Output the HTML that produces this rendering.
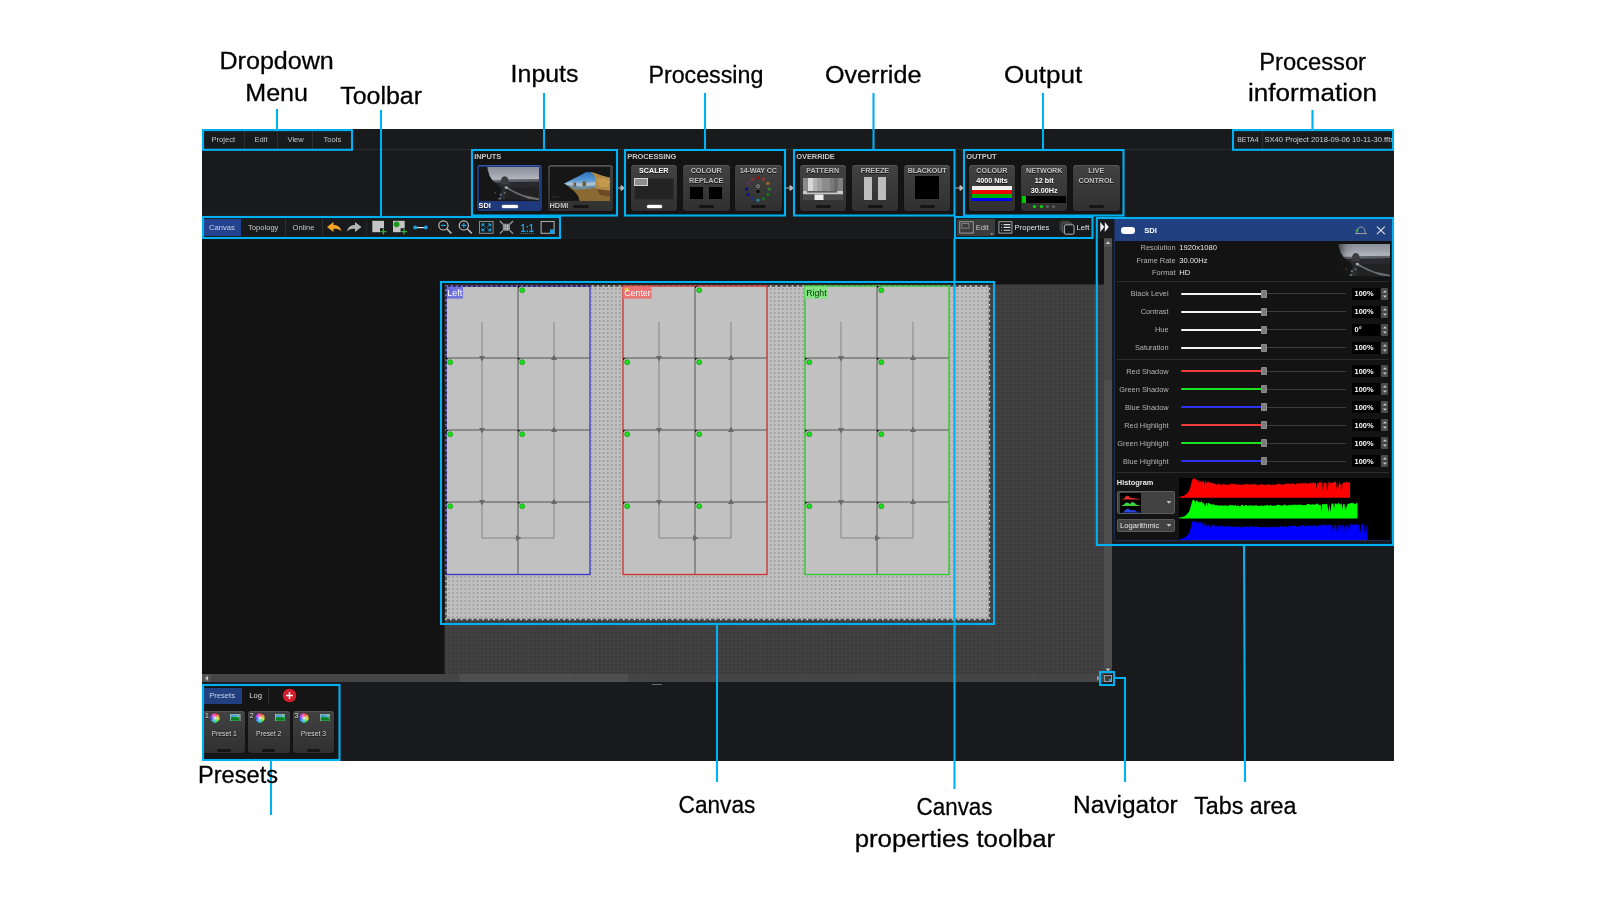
<!DOCTYPE html>
<html>
<head>
<meta charset="utf-8">
<title>Processor UI overview</title>
<style>
*{box-sizing:border-box;margin:0;padding:0}
html,body{width:1600px;height:900px;overflow:hidden;background:#fff;font-family:"Liberation Sans",sans-serif}
#stage{will-change:transform;position:absolute;left:0;top:0;width:1600px;height:900px;overflow:hidden;background:#fff}
#app{position:absolute;left:202px;top:129px;width:1192px;height:632px;background:#191a1c;overflow:hidden}
.abs{position:absolute}
/* all coordinates inside #app are expressed in page coordinates via this shim */
#app .pg{position:absolute;left:-202px;top:-129px;width:1600px;height:900px}
.t{position:absolute;color:#d8d8d8;font-size:8px;white-space:nowrap;line-height:10px}
#anno{position:absolute;left:0;top:0;width:1600px;height:900px;pointer-events:none}
#anno text{font-family:"Liberation Sans",sans-serif;font-size:23.3px;fill:#000;stroke:#000;stroke-width:0.28px}

.grp{position:absolute;background:#141414}
.gl{position:absolute;left:2.3px;top:2.8px;font-size:7.5px;font-weight:bold;color:#c6c6c6;line-height:8px;letter-spacing:-0.1px}
.tile{position:absolute;width:46.5px;height:46px;border-radius:3.5px;background:linear-gradient(#424242,#303030);box-shadow:inset 0 1px 0 #565656,0 0 0 0.5px #101010}
.tile .tl{position:absolute;font-weight:bold;color:#c4c4c4;line-height:9px;white-space:nowrap;text-shadow:0 0.6px 0 #111}
.tile .tc{position:absolute;left:0;width:100%;text-align:center;font-weight:bold;font-size:7.2px;color:#c0c0c0;line-height:9px;white-space:nowrap;text-shadow:0 0.6px 0 #111}
.pill{position:absolute;height:3.6px;border-radius:2px;background:#141414}
.pill.on{background:#fff;box-shadow:0 0 1.5px #fff}

.pr{text-align:right;color:#b4b4b4;font-size:7.4px}
.pv{color:#e8e8e8;font-size:7.6px}
</style>
</head>
<body>
<div id="stage">
<div id="app"><div class="pg">
<!--P1--><!-- menu bar -->
<div class="abs" style="left:202px;top:149px;width:1192px;height:1px;background:#2b2c30"></div>
<div class="t" style="left:211.5px;top:134.7px;font-size:7.6px;color:#c4c4c4">Project</div>
<div class="t" style="left:254.5px;top:134.7px;font-size:7.6px;color:#c4c4c4">Edit</div>
<div class="t" style="left:287.5px;top:134.7px;font-size:7.6px;color:#c4c4c4">View</div>
<div class="t" style="left:323.5px;top:134.7px;font-size:7.6px;color:#c4c4c4">Tools</div>
<div class="abs" style="left:244px;top:131px;width:1px;height:18px;background:#2e2f33"></div>
<div class="abs" style="left:277px;top:131px;width:1px;height:18px;background:#2e2f33"></div>
<div class="abs" style="left:312px;top:131px;width:1px;height:18px;background:#2e2f33"></div>
<div class="abs" style="left:1261.5px;top:131px;width:1px;height:18px;background:#2e2f33"></div>
<div class="t" style="left:1237.2px;top:134.5px;font-size:6.9px;color:#d0d0d0">BETA4</div>
<div class="t" style="left:1264.4px;top:134.5px;font-size:7.6px;color:#d0d0d0;letter-spacing:0.01px">SX40 Project 2018-09-06 10-11-30.ffb</div>

<!-- pipeline groups -->
<div class="grp" style="left:472px;top:150px;width:145px;height:66px"><span class="gl">INPUTS</span></div>
<div class="grp" style="left:625px;top:150px;width:160px;height:66px"><span class="gl">PROCESSING</span></div>
<div class="grp" style="left:794px;top:150px;width:161px;height:66px"><span class="gl">OVERRIDE</span></div>
<div class="grp" style="left:964px;top:150px;width:160px;height:66px"><span class="gl">OUTPUT</span></div>
<svg class="abs" style="left:616px;top:184px" width="9" height="8" viewBox="0 0 9 8"><path d="M0 4H6M5 1.5L8.5 4L5 6.5Z" stroke="#b8b8b8" stroke-width="1" fill="#b8b8b8"/></svg>
<svg class="abs" style="left:785px;top:184px" width="9" height="8" viewBox="0 0 9 8"><path d="M0 4H6M5 1.5L8.5 4L5 6.5Z" stroke="#b8b8b8" stroke-width="1" fill="#b8b8b8"/></svg>
<svg class="abs" style="left:955px;top:184px" width="9" height="8" viewBox="0 0 9 8"><path d="M0 4H6M5 1.5L8.5 4L5 6.5Z" stroke="#b8b8b8" stroke-width="1" fill="#b8b8b8"/></svg>

<!-- INPUT tiles -->
<div class="tile" style="left:477px;top:164.5px;width:64.5px;background:#1e3a7c;box-shadow:inset 0 1px 0 #3658a8,0 0 0 0.5px #101010">
 <svg class="abs" style="left:2px;top:2px" width="60" height="34" viewBox="0 0 60 34"><defs><linearGradient id="sky" x1="0" y1="0" x2="0" y2="1"><stop offset="0" stop-color="#868a94"/><stop offset="0.2" stop-color="#9a9ea8"/><stop offset="0.37" stop-color="#b2b6be"/><stop offset="0.42" stop-color="#70747c"/><stop offset="1" stop-color="#1c1d1e"/></linearGradient>
<radialGradient id="skyglow" cx="0.55" cy="0.05" r="0.5"><stop offset="0" stop-color="#c8ccd4" stop-opacity="0.7"/><stop offset="1" stop-color="#c8ccd4" stop-opacity="0"/></radialGradient>
<filter id="bl" x="-5%" y="-5%" width="110%" height="110%"><feGaussianBlur stdDeviation="0.55"/></filter>
<clipPath id="cp60"><rect width="60" height="34"/></clipPath></defs><g clip-path="url(#cp60)"><g filter="url(#bl)">
<rect x="-2" y="-2" width="64" height="38" fill="url(#sky)"/>
<path d="M-2 13.2L18 13.5L30 12.6L45 12.2L62 12V17H-2Z" fill="#5c6068"/>
<path d="M-2 15L20 15.4L34 15L62 14.4V36H-2Z" fill="#2a2b2d"/>
<path d="M-2 22L62 20V36H-2Z" fill="#222324"/>
<path d="M21.6 17.5C21.4 13 22.6 9.6 25.4 9.3C28.4 9.2 30.2 12.4 30 17.5Z" fill="#3b3d40"/>
<path d="M-2 -2H8.1L8.8 3L10.6 8.7L13.1 13.1L18.1 17.5L21 19.6L23 24L21 34L-2 36Z" fill="#141516"/>
<path d="M25.4 20.4L28 19.8L34 23.4L44 28L60.5 31.6V33.2L50 32L38 27.2L29 22.6Z" fill="#6c6e70"/>
<path d="M25.6 19.4L28.4 19.2L29 21.6L26 22Z" fill="#a6a8aa"/>
<path d="M19 34L21.4 27L23 22.5L25.8 21.6L27.4 24L26.4 29L26 34Z" fill="#2c2d30"/>
<rect x="20.8" y="26.8" width="1.8" height="1.8" fill="#5c7cac"/><rect x="24.8" y="25.2" width="1.6" height="1.4" fill="#7a7c7e"/><rect x="19.4" y="31" width="2.6" height="1.4" fill="#7c7e80"/><rect x="15.4" y="25" width="1.4" height="1.4" fill="#555"/>
<path d="M-2 33L30 32.6L62 33.4V36H-2Z" fill="#171717"/>
</g></g></svg>
 <div class="tl" style="left:1.5px;top:36px;color:#fff;font-size:7.4px">SDI</div>
 <div class="pill on" style="left:24.5px;top:40px;width:16px"></div>
</div>
<div class="tile" style="left:548px;top:164.5px;width:64.5px">
 <svg class="abs" style="left:2px;top:2px" width="60" height="34" viewBox="0 0 60 34"><defs>
<linearGradient id="csky" x1="0" y1="0" x2="0" y2="1"><stop offset="0" stop-color="#2c74c0"/><stop offset="0.6" stop-color="#5a98d4"/><stop offset="1" stop-color="#b4cce0"/></linearGradient></defs>
<g clip-path="url(#cp60)"><g filter="url(#bl)">
<rect x="-2" y="-2" width="64" height="38" fill="#141516"/>
<path d="M14 16.5L18 14.5L26 10.5L31 8L36 5L43 5.5L46 9L46 17L30 19Z" fill="url(#csky)"/>
<path d="M14 16.5L22 15.5L32 16.5L46 15V20L30 22L20 20Z" fill="#a8c0d0"/>
<path d="M17 18L30 19.5L46 18.5V24L30 25L22 22Z" fill="#6a8ca0"/>
<path d="M23.5 15.5h2.6v4h-2.6zM32.5 14.5h3.6v4.6h-3.6z" fill="#6e5a3e"/>
<path d="M19 20L26 22.5L36 22L46 21L62 24V36H30L28 29Z" fill="#8a6a30"/>
<path d="M40 5L45 6L52 8.5L62 11V27L52 25L45 21L46 13L44 8Z" fill="#b08a44"/>
<path d="M46 12L54 11L60 14L58 20L50 20Z" fill="#c49a50"/>
<path d="M47 22L62 24V30L50 28Z" fill="#6e4a28"/>
<path d="M-2 -2H62V11L52 8L44 4.5L36 4L30 7.5L24 10.5L18 13.5L13.5 16.5L18 20L24 24L28 29L30 36H-2Z" fill="#151617"/>
<path d="M2 30H9" stroke="#444" stroke-width="0.6"/>
</g></g></svg>
 <div class="tl" style="left:1.5px;top:36px;font-size:7.4px">HDMI</div>
 <div class="pill" style="left:24.5px;top:40px;width:16px"></div>
</div>

<!-- PROCESSING tiles -->
<div class="tile" style="left:630.5px;top:164.5px">
 <div class="tc" style="top:1.5px;color:#fff">SCALER</div>
 <div class="abs" style="left:3.3px;top:13px;width:40px;height:22.5px;background:#232323;border:1px solid #303030"></div>
 <div class="abs" style="left:3.3px;top:13px;width:14px;height:8px;background:#8e8e8e;border:1px solid #d2d2d2"></div>
 <div class="pill on" style="left:16px;top:40px;width:15px"></div>
</div>
<div class="tile" style="left:683px;top:164.5px">
 <div class="tc" style="top:1.5px">COLOUR</div><div class="tc" style="top:11.7px">REPLACE</div>
 <div class="abs" style="left:7px;top:22px;width:13px;height:12.5px;background:#000"></div>
 <div class="abs" style="left:26px;top:22px;width:13px;height:12.5px;background:#000"></div>
 <div class="pill" style="left:16px;top:40px;width:15px"></div>
</div>
<div class="tile" style="left:735px;top:164.5px">
 <div class="tc" style="top:1.5px;letter-spacing:-0.15px">14-WAY CC</div>
 <svg class="abs" style="left:9px;top:10px" width="28" height="28" viewBox="-14 -14 28 28">
  <g>
   <circle cx="0" cy="-11.3" r="1.7" fill="#8c1010"/><circle cx="5.6" cy="-9.8" r="1.7" fill="#8a3a30"/><circle cx="9.8" cy="-5.6" r="1.7" fill="#a06a20"/>
   <circle cx="11.3" cy="0" r="1.7" fill="#2f7a2f"/><circle cx="9.8" cy="5.6" r="1.7" fill="#137a13"/><circle cx="5.6" cy="9.8" r="1.7" fill="#1d6e2a"/>
   <circle cx="0" cy="11.3" r="1.7" fill="#2a7c9a"/><circle cx="-5.6" cy="9.8" r="1.7" fill="#18308a"/><circle cx="-9.8" cy="5.6" r="1.7" fill="#0a148c"/>
   <circle cx="-11.3" cy="0" r="1.7" fill="#0a1080"/><circle cx="-9.8" cy="-5.6" r="1.7" fill="#5a3058"/><circle cx="-5.6" cy="-9.8" r="1.7" fill="#8a3030"/>
   <circle cx="0" cy="-2.7" r="1.5" fill="none" stroke="#a8a8a8" stroke-width="0.8"/><circle cx="0" cy="2.4" r="1.5" fill="#000"/>
  </g>
 </svg>
 <div class="pill" style="left:16px;top:40px;width:15px"></div>
</div>

<!-- OVERRIDE tiles -->
<div class="tile" style="left:799.5px;top:164.5px">
 <div class="tc" style="top:1.5px">PATTERN</div>
 <svg class="abs" style="left:3.5px;top:13px" width="40" height="22.5" viewBox="0 0 40 22.5">
  <rect width="40" height="22.5" fill="#4a4a4a"/>
  <rect x="0" y="0" width="5" height="13" fill="#8a8a8a"/><rect x="5" y="0" width="5" height="13" fill="#d8d8d8"/><rect x="10" y="0" width="4" height="13" fill="#b4b4b4"/>
  <rect x="14" y="0" width="5" height="13" fill="#a0a0a0"/><rect x="19" y="0" width="8" height="13" fill="#8c8c8c"/><rect x="27" y="0" width="4" height="13" fill="#7a7a7a"/>
  <rect x="31" y="0" width="4" height="13" fill="#6a6a6a"/><rect x="35" y="0" width="5" height="13" fill="#808080"/>
  <rect x="0" y="13" width="40" height="3.5" fill="#c8c8c8"/><rect x="4" y="13" width="30" height="1.6" fill="#5a5a5a"/>
  <rect x="0" y="16.5" width="40" height="6" fill="#484848"/><rect x="11.5" y="16.5" width="9" height="6" fill="#ececec"/>
 </svg>
 <div class="pill" style="left:16px;top:40px;width:15px"></div>
</div>
<div class="tile" style="left:851.7px;top:164.5px">
 <div class="tc" style="top:1.5px">FREEZE</div>
 <div class="abs" style="left:12.5px;top:12px;width:8.2px;height:23px;background:#bdbdbd"></div>
 <div class="abs" style="left:26.3px;top:12px;width:8.2px;height:23px;background:#bdbdbd"></div>
 <div class="pill" style="left:16px;top:40px;width:15px"></div>
</div>
<div class="tile" style="left:903.8px;top:164.5px">
 <div class="tc" style="top:1.5px;letter-spacing:-0.2px">BLACKOUT</div>
 <div class="abs" style="left:11.4px;top:11.7px;width:23.6px;height:23.2px;background:#000"></div>
 <div class="pill" style="left:16px;top:40px;width:15px"></div>
</div>

<!-- OUTPUT tiles -->
<div class="tile" style="left:968.7px;top:164.5px">
 <div class="tc" style="top:1.5px">COLOUR</div><div class="tc" style="top:11.2px;color:#fff">4000 Nits</div>
 <div class="abs" style="left:3px;top:21.5px;width:40.5px;height:3.8px;background:#f0f0f0"></div>
 <div class="abs" style="left:3px;top:25.3px;width:40.5px;height:4px;background:#f00000"></div>
 <div class="abs" style="left:3px;top:29.3px;width:40.5px;height:4px;background:#00b000"></div>
 <div class="abs" style="left:3px;top:33.3px;width:40.5px;height:3.6px;background:#0000f0"></div>
</div>
<div class="tile" style="left:1020.9px;top:164.5px">
 <div class="tc" style="top:1.5px;letter-spacing:-0.15px">NETWORK</div><div class="tc" style="top:11.2px;color:#fff">12 bit</div><div class="tc" style="top:21.3px;color:#fff">30.00Hz</div>
 <div class="abs" style="left:1.3px;top:31px;width:43.5px;height:7.2px;background:#000"></div>
 <div class="abs" style="left:1.3px;top:31px;width:3.8px;height:7.2px;background:#00c800"></div>
 <div class="abs" style="left:12.5px;top:40.7px;width:3px;height:3px;border-radius:2px;background:#00e800"></div>
 <div class="abs" style="left:18.7px;top:40.7px;width:3px;height:3px;border-radius:2px;background:#00e800"></div>
 <div class="abs" style="left:25px;top:40.7px;width:3px;height:3px;border-radius:2px;background:#606060"></div>
 <div class="abs" style="left:31.2px;top:40.7px;width:3px;height:3px;border-radius:2px;background:#606060"></div>
</div>
<div class="tile" style="left:1073px;top:164.5px">
 <div class="tc" style="top:1.5px">LIVE</div><div class="tc" style="top:11.7px">CONTROL</div>
 <div class="pill" style="left:16px;top:40px;width:15px"></div>
</div>
<!--/P1-->
<!--P2--><!-- toolbar -->
<div class="abs" style="left:204px;top:219px;width:36.5px;height:16.5px;background:#24438e"></div>
<div class="t" style="left:209px;top:222.5px;font-size:7.6px;color:#c9d3ea">Canvas</div>
<div class="t" style="left:248px;top:222.5px;font-size:7.6px;color:#c8c8c8">Topology</div>
<div class="t" style="left:292.5px;top:222.5px;font-size:7.6px;color:#c8c8c8">Online</div>
<div class="abs" style="left:285px;top:219px;width:1px;height:17px;background:#2e2f33"></div>
<div class="abs" style="left:322px;top:219px;width:1px;height:17px;background:#2e2f33"></div>
<div class="abs" style="left:366px;top:219px;width:1px;height:17px;background:#26272b"></div>
<svg class="abs" style="left:320px;top:214px" width="250" height="28" viewBox="320 214 250 28">
 <!-- undo / redo -->
 <path d="M327 227L333.5 222V225C338 225 341 227.5 341.3 231.5C339.8 229.3 337.5 228.5 333.5 228.8V232Z" fill="#f4a62a"/>
 <path d="M361.5 227L355 222V225C350.5 225 347.5 227.5 347.2 231.5C348.7 229.3 351 228.5 355 228.8V232Z" fill="#b4b4b4"/>
 <!-- add tile -->
 <rect x="372.3" y="220.8" width="11.7" height="11.4" fill="#c4c4c4"/>
 <rect x="380" y="228.2" width="6.6" height="6.4" fill="#191a1c"/>
 <path d="M383.4 228.6V234.6M380.4 231.6H386.4" stroke="#2fb52f" stroke-width="1.3"/>
 <!-- add tile w/ dot -->
 <rect x="393" y="220.8" width="11.7" height="11.4" fill="#c4c4c4"/>
 <circle cx="396.6" cy="224.3" r="2.9" fill="#1e9a1e"/>
 <rect x="400.6" y="228.2" width="6.6" height="6.4" fill="#191a1c"/>
 <path d="M404 228.6V234.6M401 231.6H407" stroke="#2fb52f" stroke-width="1.3"/>
 <!-- connect -->
 <path d="M415 227.6H426" stroke="#e8e8e8" stroke-width="1.2"/>
 <circle cx="415.2" cy="227.6" r="2" fill="#1aa0e0"/><circle cx="425.8" cy="227.6" r="2" fill="#1aa0e0"/>
 <!-- zoom out -->
 <circle cx="443.4" cy="225.4" r="4.6" fill="none" stroke="#bdbdbd" stroke-width="1.2"/>
 <path d="M446.8 228.8L451.4 233.4" stroke="#bdbdbd" stroke-width="1.5"/>
 <path d="M441 225.4H445.8" stroke="#1aa0e0" stroke-width="1.3"/>
 <!-- zoom in -->
 <circle cx="463.8" cy="225.4" r="4.6" fill="none" stroke="#bdbdbd" stroke-width="1.2"/>
 <path d="M467.2 228.8L471.8 233.4" stroke="#bdbdbd" stroke-width="1.5"/>
 <path d="M461.4 225.4H466.2M463.8 223V227.8" stroke="#1aa0e0" stroke-width="1.3"/>
 <!-- fit -->
 <rect x="479.5" y="221.5" width="13.6" height="11.8" fill="none" stroke="#8c8c8c" stroke-width="1"/>
 <path d="M481.5 223.5H485L481.5 227ZM491.1 223.5H487.6L491.1 227ZM481.5 231.3H485L481.5 227.8ZM491.1 231.3H487.6L491.1 227.8Z" fill="#1aa0e0"/>
 <path d="M482.5 224.5L485.3 226.6M490.1 224.5L487.3 226.6M482.5 230.3L485.3 228.2M490.1 230.3L487.3 228.2" stroke="#1aa0e0" stroke-width="0.9"/>
 <!-- fit selected -->
 <path d="M499.8 221L503.3 224.5M513 221L509.5 224.5M499.8 233.6L503.3 230.1M513 233.6L509.5 230.1" stroke="#a8a8a8" stroke-width="1.1"/>
 <rect x="502.8" y="223.8" width="7.2" height="7" fill="#7a7a7a"/>
 <path d="M505.2 223.8V230.8M507.6 223.8V230.8M502.8 226.1H510M502.8 228.5H510" stroke="#d0d0d0" stroke-width="0.6"/>
 <!-- 1:1 -->
 <text x="520.6" y="232.4" font-family="Liberation Sans, sans-serif" font-size="11.8" font-weight="bold" fill="#1aa0e0" textLength="13.2" lengthAdjust="spacingAndGlyphs">1:1</text>
 <path d="M520.8 233.4H534.2" stroke="#1aa0e0" stroke-width="0.8" stroke-dasharray="1.2 0.8"/>
 <!-- navigator toggle -->
 <rect x="541.1" y="221.5" width="13" height="11.8" fill="none" stroke="#a8a8a8" stroke-width="1.1"/>
 <rect x="550" y="229.4" width="4.4" height="4.2" fill="#1aa0e0"/>
</svg>

<!-- canvas properties toolbar -->
<div class="abs" style="left:957px;top:219.3px;width:37.5px;height:17px;background:#3b3b3b;border-radius:1px"></div>
<svg class="abs" style="left:950px;top:214px" width="170" height="28" viewBox="950 214 170 28">
 <rect x="959.7" y="221.7" width="13.6" height="11.4" fill="none" stroke="#9a9a9a" stroke-width="1"/>
 <rect x="961.8" y="223.6" width="7.2" height="4.6" fill="none" stroke="#8a8a8a" stroke-width="0.9"/>
 <path d="M990.3 233.3H993.3L991.8 235Z" fill="#b0b0b0"/>
 <rect x="998.9" y="221.7" width="13" height="11.4" fill="none" stroke="#a0a0a0" stroke-width="1"/>
 <path d="M1001 224.6H1002.2M1001 227.4H1002.2M1001 230.2H1002.2" stroke="#b0b0b0" stroke-width="1"/>
 <path d="M1003.6 224.6H1010.4M1003.6 227.4H1010.4M1003.6 230.2H1010.4" stroke="#e0e0e0" stroke-width="1.1"/>
 <rect x="1060.2" y="221.2" width="9.6" height="9.4" rx="1.3" fill="#2c2c2c" stroke="#4a4a4a" stroke-width="0.9"/>
 <rect x="1062.2" y="223" width="9.6" height="9.4" rx="1.3" fill="#2c2c2c" stroke="#6a6a6a" stroke-width="0.9"/>
 <rect x="1064.4" y="224.8" width="9.6" height="9.4" rx="1.3" fill="#17181a" stroke="#b4b4b4" stroke-width="1"/>
 <!-- collapse chevrons -->
 <path d="M1100.3 222L1104.3 227L1100.3 232ZM1104.8 222L1108.8 227L1104.8 232Z" fill="#f0f0f0"/>
</svg>
<div class="t" style="left:975.7px;top:223px;font-size:7.6px;color:#c8c8c8">Edit</div>
<div class="t" style="left:1014.6px;top:223px;font-size:7.6px;color:#e4e4e4">Properties</div>
<div class="t" style="left:1076.6px;top:223px;font-size:7.6px;color:#e4e4e4">Left</div>
<!--/P2-->
<!--P3--><!-- canvas viewport -->
<div class="abs" style="left:202px;top:238.7px;width:902px;height:436px;background:#131313"></div>
<svg class="abs" style="left:202px;top:238px" width="902" height="436" viewBox="202 238 902 436">
<defs>
<pattern id="dd" x="446" y="286" width="4.07" height="4" patternUnits="userSpaceOnUse"><rect width="4.07" height="4" fill="#414141"/><rect x="2.3" y="2.4" width="1.5" height="1.2" fill="#2f2f2f"/></pattern>
<pattern id="dl" x="446" y="286" width="4.07" height="4" patternUnits="userSpaceOnUse"><rect width="4.07" height="4" fill="#bfbfbf"/><rect x="2.3" y="2.4" width="1.5" height="1.2" fill="#858585"/></pattern>
<marker id="x"/>
</defs>
<rect x="444.6" y="284.4" width="660" height="390" fill="url(#dd)"/>
<rect x="446" y="286" width="543.5" height="333.5" fill="url(#dl)"/>
<rect x="446" y="286" width="543.5" height="333.5" fill="none" stroke="#505050" stroke-width="1.6"/>
<rect x="446" y="286" width="543.5" height="333.5" fill="none" stroke="#dcdcdc" stroke-width="1.3" stroke-dasharray="1.7 3.7"/>
<rect x="446" y="286" width="144" height="288.5" fill="#c1c1c1"/>
<path d="M518 286V574.5M446 358H590M446 430H590M446 502H590" stroke="#545454" stroke-width="1" fill="none"/>
<path d="M482 322V538H554V322" stroke="#808080" stroke-width="0.9" fill="none"/>
<path d="M479 356H485L482 361.5Z" fill="#6a6a6a"/>
<path d="M551 360H557L554 354.5Z" fill="#6a6a6a"/>
<path d="M479 428H485L482 433.5Z" fill="#6a6a6a"/>
<path d="M551 432H557L554 426.5Z" fill="#6a6a6a"/>
<path d="M479 500H485L482 505.5Z" fill="#6a6a6a"/>
<path d="M551 504H557L554 498.5Z" fill="#6a6a6a"/>
<path d="M516 535V541L521.5 538Z" fill="#6a6a6a"/>
<rect x="446" y="286" width="144" height="288.5" fill="none" stroke="#3a3ac4" stroke-width="1.35"/>
<path d="M518 286h2.6l-2.6 2.6Z" fill="#1a1a1a"/>
<circle cx="522.2" cy="290.2" r="2.5" fill="#1de01d" stroke="#0c8c0c" stroke-width="0.6"/>
<path d="M446 358h2.6l-2.6 2.6Z" fill="#1a1a1a"/>
<circle cx="450.2" cy="362.2" r="2.5" fill="#1de01d" stroke="#0c8c0c" stroke-width="0.6"/>
<path d="M518 358h2.6l-2.6 2.6Z" fill="#1a1a1a"/>
<circle cx="522.2" cy="362.2" r="2.5" fill="#1de01d" stroke="#0c8c0c" stroke-width="0.6"/>
<path d="M446 430h2.6l-2.6 2.6Z" fill="#1a1a1a"/>
<circle cx="450.2" cy="434.2" r="2.5" fill="#1de01d" stroke="#0c8c0c" stroke-width="0.6"/>
<path d="M518 430h2.6l-2.6 2.6Z" fill="#1a1a1a"/>
<circle cx="522.2" cy="434.2" r="2.5" fill="#1de01d" stroke="#0c8c0c" stroke-width="0.6"/>
<path d="M446 502h2.6l-2.6 2.6Z" fill="#1a1a1a"/>
<circle cx="450.2" cy="506.2" r="2.5" fill="#1de01d" stroke="#0c8c0c" stroke-width="0.6"/>
<path d="M518 502h2.6l-2.6 2.6Z" fill="#1a1a1a"/>
<circle cx="522.2" cy="506.2" r="2.5" fill="#1de01d" stroke="#0c8c0c" stroke-width="0.6"/>
<circle cx="450.2" cy="290.2" r="2.5" fill="#2a50a0"/>
<rect x="445.7" y="286.4" width="17.3" height="12.2" fill="#6c6ce0" opacity="0.92"/>
<text x="447.2" y="296.2" font-family="Liberation Sans, sans-serif" font-size="9" fill="#fff" textLength="15.0" lengthAdjust="spacingAndGlyphs">Left</text>
<rect x="623" y="286" width="144" height="288.5" fill="#c1c1c1"/>
<path d="M695 286V574.5M623 358H767M623 430H767M623 502H767" stroke="#545454" stroke-width="1" fill="none"/>
<path d="M659 322V538H731V322" stroke="#808080" stroke-width="0.9" fill="none"/>
<path d="M656 356H662L659 361.5Z" fill="#6a6a6a"/>
<path d="M728 360H734L731 354.5Z" fill="#6a6a6a"/>
<path d="M656 428H662L659 433.5Z" fill="#6a6a6a"/>
<path d="M728 432H734L731 426.5Z" fill="#6a6a6a"/>
<path d="M656 500H662L659 505.5Z" fill="#6a6a6a"/>
<path d="M728 504H734L731 498.5Z" fill="#6a6a6a"/>
<path d="M693 535V541L698.5 538Z" fill="#6a6a6a"/>
<rect x="623" y="286" width="144" height="288.5" fill="none" stroke="#cc3434" stroke-width="1.35"/>
<path d="M695 286h2.6l-2.6 2.6Z" fill="#1a1a1a"/>
<circle cx="699.2" cy="290.2" r="2.5" fill="#1de01d" stroke="#0c8c0c" stroke-width="0.6"/>
<path d="M623 358h2.6l-2.6 2.6Z" fill="#1a1a1a"/>
<circle cx="627.2" cy="362.2" r="2.5" fill="#1de01d" stroke="#0c8c0c" stroke-width="0.6"/>
<path d="M695 358h2.6l-2.6 2.6Z" fill="#1a1a1a"/>
<circle cx="699.2" cy="362.2" r="2.5" fill="#1de01d" stroke="#0c8c0c" stroke-width="0.6"/>
<path d="M623 430h2.6l-2.6 2.6Z" fill="#1a1a1a"/>
<circle cx="627.2" cy="434.2" r="2.5" fill="#1de01d" stroke="#0c8c0c" stroke-width="0.6"/>
<path d="M695 430h2.6l-2.6 2.6Z" fill="#1a1a1a"/>
<circle cx="699.2" cy="434.2" r="2.5" fill="#1de01d" stroke="#0c8c0c" stroke-width="0.6"/>
<path d="M623 502h2.6l-2.6 2.6Z" fill="#1a1a1a"/>
<circle cx="627.2" cy="506.2" r="2.5" fill="#1de01d" stroke="#0c8c0c" stroke-width="0.6"/>
<path d="M695 502h2.6l-2.6 2.6Z" fill="#1a1a1a"/>
<circle cx="699.2" cy="506.2" r="2.5" fill="#1de01d" stroke="#0c8c0c" stroke-width="0.6"/>
<rect x="622.7" y="286.4" width="28.8" height="12.2" fill="#ee6c6c" opacity="0.92"/><circle cx="626.6" cy="289.6" r="2.2" fill="#d8d040" opacity="0.85"/>
<text x="624.2" y="296.2" font-family="Liberation Sans, sans-serif" font-size="9" fill="#fff" textLength="26.5" lengthAdjust="spacingAndGlyphs">Center</text>
<rect x="805" y="286" width="144" height="288.5" fill="#c1c1c1"/>
<path d="M877 286V574.5M805 358H949M805 430H949M805 502H949" stroke="#545454" stroke-width="1" fill="none"/>
<path d="M841 322V538H913V322" stroke="#808080" stroke-width="0.9" fill="none"/>
<path d="M838 356H844L841 361.5Z" fill="#6a6a6a"/>
<path d="M910 360H916L913 354.5Z" fill="#6a6a6a"/>
<path d="M838 428H844L841 433.5Z" fill="#6a6a6a"/>
<path d="M910 432H916L913 426.5Z" fill="#6a6a6a"/>
<path d="M838 500H844L841 505.5Z" fill="#6a6a6a"/>
<path d="M910 504H916L913 498.5Z" fill="#6a6a6a"/>
<path d="M875 535V541L880.5 538Z" fill="#6a6a6a"/>
<rect x="805" y="286" width="144" height="288.5" fill="none" stroke="#2ec82e" stroke-width="1.35"/>
<path d="M877 286h2.6l-2.6 2.6Z" fill="#1a1a1a"/>
<circle cx="881.2" cy="290.2" r="2.5" fill="#1de01d" stroke="#0c8c0c" stroke-width="0.6"/>
<path d="M805 358h2.6l-2.6 2.6Z" fill="#1a1a1a"/>
<circle cx="809.2" cy="362.2" r="2.5" fill="#1de01d" stroke="#0c8c0c" stroke-width="0.6"/>
<path d="M877 358h2.6l-2.6 2.6Z" fill="#1a1a1a"/>
<circle cx="881.2" cy="362.2" r="2.5" fill="#1de01d" stroke="#0c8c0c" stroke-width="0.6"/>
<path d="M805 430h2.6l-2.6 2.6Z" fill="#1a1a1a"/>
<circle cx="809.2" cy="434.2" r="2.5" fill="#1de01d" stroke="#0c8c0c" stroke-width="0.6"/>
<path d="M877 430h2.6l-2.6 2.6Z" fill="#1a1a1a"/>
<circle cx="881.2" cy="434.2" r="2.5" fill="#1de01d" stroke="#0c8c0c" stroke-width="0.6"/>
<path d="M805 502h2.6l-2.6 2.6Z" fill="#1a1a1a"/>
<circle cx="809.2" cy="506.2" r="2.5" fill="#1de01d" stroke="#0c8c0c" stroke-width="0.6"/>
<path d="M877 502h2.6l-2.6 2.6Z" fill="#1a1a1a"/>
<circle cx="881.2" cy="506.2" r="2.5" fill="#1de01d" stroke="#0c8c0c" stroke-width="0.6"/>
<rect x="804.7" y="286.4" width="22.8" height="12.2" fill="#7ce67c" opacity="0.92"/>
<text x="806.2" y="296.2" font-family="Liberation Sans, sans-serif" font-size="9" fill="#0a3a0a" textLength="20.5" lengthAdjust="spacingAndGlyphs">Right</text>
<path d="M446 574V286H590" fill="none" stroke="#1c1c2c" stroke-width="1.6" stroke-dasharray="2.5 2.5"/>
</svg>
<div class="abs" style="left:1103.5px;top:238px;width:8.3px;height:436px;background:#454545"></div>
<div class="abs" style="left:1103.5px;top:380px;width:8.3px;height:287px;background:#4e4e4e"></div>
<div class="abs" style="left:1104px;top:238.7px;width:7.5px;height:8.3px;background:#545454"></div>
<svg class="abs" style="left:1104px;top:238px" width="8" height="10" viewBox="0 0 8 10"><path d="M1.5 6L4 3.2L6.5 6Z" fill="#c8c8c8"/></svg>
<svg class="abs" style="left:1104px;top:665px" width="8" height="10" viewBox="0 0 8 10"><path d="M1.5 3.5L4 6.3L6.5 3.5Z" fill="#c8c8c8"/></svg>
<div class="abs" style="left:202px;top:674.2px;width:902px;height:8.3px;background:#454545"></div>
<div class="abs" style="left:459.5px;top:674.2px;width:168.5px;height:8.3px;background:#4e4e4e;box-shadow:inset 0 0 0 0.5px #585858"></div>
<div class="abs" style="left:202px;top:674.2px;width:9px;height:8.3px;background:#545454"></div>
<svg class="abs" style="left:202px;top:674px" width="10" height="9" viewBox="0 0 10 9"><path d="M6 1.8L3 4.3L6 6.8Z" fill="#c8c8c8"/></svg>
<svg class="abs" style="left:1093px;top:674px" width="10" height="9" viewBox="0 0 10 9"><path d="M4 1.8L7 4.3L4 6.8Z" fill="#9a9a9a"/></svg>
<div class="abs" style="left:1104px;top:674.5px;width:7.5px;height:7.5px;background:#3c3c3c;border:0.8px solid #9a9a9a"></div>
<div class="abs" style="left:1108.6px;top:679px;width:2.4px;height:2.4px;background:#1aa0e0"></div>
<div class="abs" style="left:652px;top:683.6px;width:10px;height:1px;background:#6a6a6a"></div>
<!--/P3-->
<!--P4--><!-- right panel -->
<div class="abs" style="left:1114.2px;top:219px;width:277.8px;height:322.4px;background:#131313;border:1px solid #1a2c58;border-top:none;border-radius:0 0 2.5px 2.5px"></div>
<div class="abs" style="left:1114.7px;top:219px;width:277.3px;height:22px;background:#20407f"></div>
<div class="abs" style="left:1121.4px;top:227px;width:14px;height:6.6px;border-radius:3.3px;background:#fff"></div>
<div class="t" style="left:1144.2px;top:225.9px;font-size:7.6px;font-weight:bold;color:#fff">SDI</div>
<svg class="abs" style="left:1350px;top:222px" width="40" height="16" viewBox="1350 222 40 16">
<path d="M1357 233.6C1356.5 229.5 1358.5 227 1361 227C1363.6 227 1365.3 229.5 1365 233.6M1355 233.6H1367" fill="none" stroke="#aaa" stroke-width="0.9"/>
<path d="M1355 230.2L1358.6 229L1357.8 232.4Z" fill="#30c030"/>
<path d="M1377 226.6L1384.8 234.2M1384.8 226.6L1377 234.2" stroke="#e0e0e0" stroke-width="1.1"/>
</svg>
<div class="t pr" style="left:1095px;width:80.5px;top:243.4px">Resolution</div>
<div class="t pv" style="left:1179.3px;top:243.4px">1920x1080</div>
<div class="t pr" style="left:1095px;width:80.5px;top:255.9px">Frame Rate</div>
<div class="t pv" style="left:1179.3px;top:255.9px">30.00Hz</div>
<div class="t pr" style="left:1095px;width:80.5px;top:268.2px">Format</div>
<div class="t pv" style="left:1179.3px;top:268.2px">HD</div>
<svg class="abs" style="left:1329.6px;top:243.8px" width="60.2" height="33.3" viewBox="0 0 60 34" preserveAspectRatio="none"><defs><linearGradient id="fade" x1="0" y1="0" x2="1" y2="0"><stop offset="0" stop-color="#131313" stop-opacity="1"/><stop offset="0.1" stop-color="#131313" stop-opacity="0.95"/><stop offset="0.16" stop-color="#131313" stop-opacity="0.5"/><stop offset="0.27" stop-color="#131313" stop-opacity="0.12"/><stop offset="0.4" stop-color="#131313" stop-opacity="0"/></linearGradient></defs><g clip-path="url(#cp60)"><g filter="url(#bl)">
<rect x="-2" y="-2" width="64" height="38" fill="url(#sky)"/>
<path d="M-2 13.2L18 13.5L30 12.6L45 12.2L62 12V17H-2Z" fill="#5c6068"/>
<path d="M-2 15L20 15.4L34 15L62 14.4V36H-2Z" fill="#2a2b2d"/>
<path d="M-2 22L62 20V36H-2Z" fill="#222324"/>
<path d="M21.6 17.5C21.4 13 22.6 9.6 25.4 9.3C28.4 9.2 30.2 12.4 30 17.5Z" fill="#3b3d40"/>
<path d="M-2 -2H8.1L8.8 3L10.6 8.7L13.1 13.1L18.1 17.5L21 19.6L23 24L21 34L-2 36Z" fill="#141516"/>
<path d="M25.4 20.4L28 19.8L34 23.4L44 28L60.5 31.6V33.2L50 32L38 27.2L29 22.6Z" fill="#6c6e70"/>
<path d="M25.6 19.4L28.4 19.2L29 21.6L26 22Z" fill="#a6a8aa"/>
<path d="M19 34L21.4 27L23 22.5L25.8 21.6L27.4 24L26.4 29L26 34Z" fill="#2c2d30"/>
<rect x="20.8" y="26.8" width="1.8" height="1.8" fill="#5c7cac"/><rect x="24.8" y="25.2" width="1.6" height="1.4" fill="#7a7c7e"/><rect x="19.4" y="31" width="2.6" height="1.4" fill="#7c7e80"/><rect x="15.4" y="25" width="1.4" height="1.4" fill="#555"/>
<path d="M-2 33L30 32.6L62 33.4V36H-2Z" fill="#171717"/>
</g></g><rect width="60" height="34" fill="url(#fade)"/></svg>
<div class="abs" style="left:1117px;top:281.2px;width:272px;height:1px;background:#2c2c2c"></div>
<div class="abs" style="left:1117px;top:359.1px;width:272px;height:1px;background:#2c2c2c"></div>
<div class="abs" style="left:1117px;top:472.2px;width:272px;height:1px;background:#2c2c2c"></div>
<div class="t pr" style="left:1095px;width:73.6px;top:289.3px">Black Level</div>
<div class="abs" style="left:1180.5px;top:293.1px;width:165.5px;height:1.2px;background:#3c3c3c"></div>
<div class="abs" style="left:1180.5px;top:292.8px;width:83px;height:1.8px;background:#f2f2f2;border-radius:1px"></div>
<div class="abs" style="left:1260.6px;top:289.7px;width:6.6px;height:8px;background:#7c7c7c;border-radius:1.5px;box-shadow:inset 0 0 0 0.6px #9a9a9a"></div>
<div class="abs" style="left:1351.6px;top:287.7px;width:28.6px;height:12px;background:#000"></div>
<div class="t" style="left:1354.6px;top:289.3px;font-size:7.4px;font-weight:bold;color:#fff">100%</div>
<div class="abs" style="left:1380.6px;top:287.7px;width:7.8px;height:12px;background:#4c4c4c;border-radius:1px"></div>
<svg class="abs" style="left:1380.6px;top:287.7px" width="7.8" height="12" viewBox="0 0 7.8 12"><path d="M1.9 4.6L3.9 2.2L5.9 4.6ZM1.9 7.4L3.9 9.8L5.9 7.4Z" fill="#c4c4c4"/><path d="M0.5 6H7.3" stroke="#333" stroke-width="0.6"/></svg>
<div class="t pr" style="left:1095px;width:73.6px;top:307.3px">Contrast</div>
<div class="abs" style="left:1180.5px;top:311.1px;width:165.5px;height:1.2px;background:#3c3c3c"></div>
<div class="abs" style="left:1180.5px;top:310.8px;width:83px;height:1.8px;background:#f2f2f2;border-radius:1px"></div>
<div class="abs" style="left:1260.6px;top:307.7px;width:6.6px;height:8px;background:#7c7c7c;border-radius:1.5px;box-shadow:inset 0 0 0 0.6px #9a9a9a"></div>
<div class="abs" style="left:1351.6px;top:305.7px;width:28.6px;height:12px;background:#000"></div>
<div class="t" style="left:1354.6px;top:307.3px;font-size:7.4px;font-weight:bold;color:#fff">100%</div>
<div class="abs" style="left:1380.6px;top:305.7px;width:7.8px;height:12px;background:#4c4c4c;border-radius:1px"></div>
<svg class="abs" style="left:1380.6px;top:305.7px" width="7.8" height="12" viewBox="0 0 7.8 12"><path d="M1.9 4.6L3.9 2.2L5.9 4.6ZM1.9 7.4L3.9 9.8L5.9 7.4Z" fill="#c4c4c4"/><path d="M0.5 6H7.3" stroke="#333" stroke-width="0.6"/></svg>
<div class="t pr" style="left:1095px;width:73.6px;top:325.3px">Hue</div>
<div class="abs" style="left:1180.5px;top:329.1px;width:165.5px;height:1.2px;background:#3c3c3c"></div>
<div class="abs" style="left:1180.5px;top:328.8px;width:83px;height:1.8px;background:#f2f2f2;border-radius:1px"></div>
<div class="abs" style="left:1260.6px;top:325.7px;width:6.6px;height:8px;background:#7c7c7c;border-radius:1.5px;box-shadow:inset 0 0 0 0.6px #9a9a9a"></div>
<div class="abs" style="left:1351.6px;top:323.7px;width:28.6px;height:12px;background:#000"></div>
<div class="t" style="left:1354.6px;top:325.3px;font-size:7.4px;font-weight:bold;color:#fff">0°</div>
<div class="abs" style="left:1380.6px;top:323.7px;width:7.8px;height:12px;background:#4c4c4c;border-radius:1px"></div>
<svg class="abs" style="left:1380.6px;top:323.7px" width="7.8" height="12" viewBox="0 0 7.8 12"><path d="M1.9 4.6L3.9 2.2L5.9 4.6ZM1.9 7.4L3.9 9.8L5.9 7.4Z" fill="#c4c4c4"/><path d="M0.5 6H7.3" stroke="#333" stroke-width="0.6"/></svg>
<div class="t pr" style="left:1095px;width:73.6px;top:343.4px">Saturation</div>
<div class="abs" style="left:1180.5px;top:347.2px;width:165.5px;height:1.2px;background:#3c3c3c"></div>
<div class="abs" style="left:1180.5px;top:346.9px;width:83px;height:1.8px;background:#f2f2f2;border-radius:1px"></div>
<div class="abs" style="left:1260.6px;top:343.8px;width:6.6px;height:8px;background:#7c7c7c;border-radius:1.5px;box-shadow:inset 0 0 0 0.6px #9a9a9a"></div>
<div class="abs" style="left:1351.6px;top:341.8px;width:28.6px;height:12px;background:#000"></div>
<div class="t" style="left:1354.6px;top:343.4px;font-size:7.4px;font-weight:bold;color:#fff">100%</div>
<div class="abs" style="left:1380.6px;top:341.8px;width:7.8px;height:12px;background:#4c4c4c;border-radius:1px"></div>
<svg class="abs" style="left:1380.6px;top:341.8px" width="7.8" height="12" viewBox="0 0 7.8 12"><path d="M1.9 4.6L3.9 2.2L5.9 4.6ZM1.9 7.4L3.9 9.8L5.9 7.4Z" fill="#c4c4c4"/><path d="M0.5 6H7.3" stroke="#333" stroke-width="0.6"/></svg>
<div class="t pr" style="left:1095px;width:73.6px;top:366.7px">Red Shadow</div>
<div class="abs" style="left:1180.5px;top:370.5px;width:165.5px;height:1.2px;background:#3c3c3c"></div>
<div class="abs" style="left:1180.5px;top:370.2px;width:83px;height:1.8px;background:#f03c3c;border-radius:1px"></div>
<div class="abs" style="left:1260.6px;top:367.1px;width:6.6px;height:8px;background:#7c7c7c;border-radius:1.5px;box-shadow:inset 0 0 0 0.6px #9a9a9a"></div>
<div class="abs" style="left:1351.6px;top:365.1px;width:28.6px;height:12px;background:#000"></div>
<div class="t" style="left:1354.6px;top:366.7px;font-size:7.4px;font-weight:bold;color:#fff">100%</div>
<div class="abs" style="left:1380.6px;top:365.1px;width:7.8px;height:12px;background:#4c4c4c;border-radius:1px"></div>
<svg class="abs" style="left:1380.6px;top:365.1px" width="7.8" height="12" viewBox="0 0 7.8 12"><path d="M1.9 4.6L3.9 2.2L5.9 4.6ZM1.9 7.4L3.9 9.8L5.9 7.4Z" fill="#c4c4c4"/><path d="M0.5 6H7.3" stroke="#333" stroke-width="0.6"/></svg>
<div class="t pr" style="left:1095px;width:73.6px;top:384.9px">Green Shadow</div>
<div class="abs" style="left:1180.5px;top:388.7px;width:165.5px;height:1.2px;background:#3c3c3c"></div>
<div class="abs" style="left:1180.5px;top:388.4px;width:83px;height:1.8px;background:#1ee01e;border-radius:1px"></div>
<div class="abs" style="left:1260.6px;top:385.3px;width:6.6px;height:8px;background:#7c7c7c;border-radius:1.5px;box-shadow:inset 0 0 0 0.6px #9a9a9a"></div>
<div class="abs" style="left:1351.6px;top:383.3px;width:28.6px;height:12px;background:#000"></div>
<div class="t" style="left:1354.6px;top:384.9px;font-size:7.4px;font-weight:bold;color:#fff">100%</div>
<div class="abs" style="left:1380.6px;top:383.3px;width:7.8px;height:12px;background:#4c4c4c;border-radius:1px"></div>
<svg class="abs" style="left:1380.6px;top:383.3px" width="7.8" height="12" viewBox="0 0 7.8 12"><path d="M1.9 4.6L3.9 2.2L5.9 4.6ZM1.9 7.4L3.9 9.8L5.9 7.4Z" fill="#c4c4c4"/><path d="M0.5 6H7.3" stroke="#333" stroke-width="0.6"/></svg>
<div class="t pr" style="left:1095px;width:73.6px;top:402.9px">Blue Shadow</div>
<div class="abs" style="left:1180.5px;top:406.7px;width:165.5px;height:1.2px;background:#3c3c3c"></div>
<div class="abs" style="left:1180.5px;top:406.4px;width:83px;height:1.8px;background:#3030f0;border-radius:1px"></div>
<div class="abs" style="left:1260.6px;top:403.3px;width:6.6px;height:8px;background:#7c7c7c;border-radius:1.5px;box-shadow:inset 0 0 0 0.6px #9a9a9a"></div>
<div class="abs" style="left:1351.6px;top:401.3px;width:28.6px;height:12px;background:#000"></div>
<div class="t" style="left:1354.6px;top:402.9px;font-size:7.4px;font-weight:bold;color:#fff">100%</div>
<div class="abs" style="left:1380.6px;top:401.3px;width:7.8px;height:12px;background:#4c4c4c;border-radius:1px"></div>
<svg class="abs" style="left:1380.6px;top:401.3px" width="7.8" height="12" viewBox="0 0 7.8 12"><path d="M1.9 4.6L3.9 2.2L5.9 4.6ZM1.9 7.4L3.9 9.8L5.9 7.4Z" fill="#c4c4c4"/><path d="M0.5 6H7.3" stroke="#333" stroke-width="0.6"/></svg>
<div class="t pr" style="left:1095px;width:73.6px;top:420.9px">Red Highlight</div>
<div class="abs" style="left:1180.5px;top:424.7px;width:165.5px;height:1.2px;background:#3c3c3c"></div>
<div class="abs" style="left:1180.5px;top:424.4px;width:83px;height:1.8px;background:#f03c3c;border-radius:1px"></div>
<div class="abs" style="left:1260.6px;top:421.3px;width:6.6px;height:8px;background:#7c7c7c;border-radius:1.5px;box-shadow:inset 0 0 0 0.6px #9a9a9a"></div>
<div class="abs" style="left:1351.6px;top:419.3px;width:28.6px;height:12px;background:#000"></div>
<div class="t" style="left:1354.6px;top:420.9px;font-size:7.4px;font-weight:bold;color:#fff">100%</div>
<div class="abs" style="left:1380.6px;top:419.3px;width:7.8px;height:12px;background:#4c4c4c;border-radius:1px"></div>
<svg class="abs" style="left:1380.6px;top:419.3px" width="7.8" height="12" viewBox="0 0 7.8 12"><path d="M1.9 4.6L3.9 2.2L5.9 4.6ZM1.9 7.4L3.9 9.8L5.9 7.4Z" fill="#c4c4c4"/><path d="M0.5 6H7.3" stroke="#333" stroke-width="0.6"/></svg>
<div class="t pr" style="left:1095px;width:73.6px;top:438.9px">Green Highlight</div>
<div class="abs" style="left:1180.5px;top:442.7px;width:165.5px;height:1.2px;background:#3c3c3c"></div>
<div class="abs" style="left:1180.5px;top:442.4px;width:83px;height:1.8px;background:#1ee01e;border-radius:1px"></div>
<div class="abs" style="left:1260.6px;top:439.3px;width:6.6px;height:8px;background:#7c7c7c;border-radius:1.5px;box-shadow:inset 0 0 0 0.6px #9a9a9a"></div>
<div class="abs" style="left:1351.6px;top:437.3px;width:28.6px;height:12px;background:#000"></div>
<div class="t" style="left:1354.6px;top:438.9px;font-size:7.4px;font-weight:bold;color:#fff">100%</div>
<div class="abs" style="left:1380.6px;top:437.3px;width:7.8px;height:12px;background:#4c4c4c;border-radius:1px"></div>
<svg class="abs" style="left:1380.6px;top:437.3px" width="7.8" height="12" viewBox="0 0 7.8 12"><path d="M1.9 4.6L3.9 2.2L5.9 4.6ZM1.9 7.4L3.9 9.8L5.9 7.4Z" fill="#c4c4c4"/><path d="M0.5 6H7.3" stroke="#333" stroke-width="0.6"/></svg>
<div class="t pr" style="left:1095px;width:73.6px;top:456.9px">Blue Highlight</div>
<div class="abs" style="left:1180.5px;top:460.7px;width:165.5px;height:1.2px;background:#3c3c3c"></div>
<div class="abs" style="left:1180.5px;top:460.4px;width:83px;height:1.8px;background:#3030f0;border-radius:1px"></div>
<div class="abs" style="left:1260.6px;top:457.3px;width:6.6px;height:8px;background:#7c7c7c;border-radius:1.5px;box-shadow:inset 0 0 0 0.6px #9a9a9a"></div>
<div class="abs" style="left:1351.6px;top:455.3px;width:28.6px;height:12px;background:#000"></div>
<div class="t" style="left:1354.6px;top:456.9px;font-size:7.4px;font-weight:bold;color:#fff">100%</div>
<div class="abs" style="left:1380.6px;top:455.3px;width:7.8px;height:12px;background:#4c4c4c;border-radius:1px"></div>
<svg class="abs" style="left:1380.6px;top:455.3px" width="7.8" height="12" viewBox="0 0 7.8 12"><path d="M1.9 4.6L3.9 2.2L5.9 4.6ZM1.9 7.4L3.9 9.8L5.9 7.4Z" fill="#c4c4c4"/><path d="M0.5 6H7.3" stroke="#333" stroke-width="0.6"/></svg>
<div class="t" style="left:1116.8px;top:477.8px;font-size:7.4px;font-weight:bold;color:#e8e8e8">Histogram</div>
<div class="abs" style="left:1117.3px;top:490.7px;width:57.8px;height:23.2px;background:#424242;border:0.8px solid #5c5c5c;border-radius:1.5px"></div>
<svg class="abs" style="left:1120px;top:492.7px" width="21" height="20.2" viewBox="0 0 21 20.2"><rect width="21" height="20.2" fill="#000"/>
<path d="M1.5 6.3L4 5.5L6 3.2L8 2.6L10 4.6L13 5L16 5.6L20 6V6.6H1.5Z" fill="#e03030"/>
<path d="M1.5 12.8L4 11.6L6 9.4L8 9.8L10 11L12 9L14 9.4L16 11.6L20 12.4V13H1.5Z" fill="#40d040"/>
<path d="M1.5 19.4L4 18.6L6 16.4L8 15.4L10 17L12 17.6L14 16.8L16 18.4L20 19V19.6H1.5Z" fill="#2848f0"/></svg>
<svg class="abs" style="left:1166px;top:500px" width="6" height="5" viewBox="0 0 6 5"><path d="M0.6 1L5.4 1L3 3.8Z" fill="#c4c4c4"/></svg>
<div class="abs" style="left:1117.3px;top:519.3px;width:57.8px;height:12.4px;background:#424242;border:0.8px solid #5c5c5c;border-radius:1.5px"></div>
<div class="t" style="left:1120px;top:521.2px;font-size:7.6px;color:#e4e4e4">Logarithmic</div>
<svg class="abs" style="left:1166px;top:523.3px" width="6" height="5" viewBox="0 0 6 5"><path d="M0.6 1L5.4 1L3 3.8Z" fill="#c4c4c4"/></svg>
<svg class="abs" style="left:1179.3px;top:477.8px" width="211" height="62.6" viewBox="1179.3 477.8 211 62.6">
<rect x="1179.3" y="477.8" width="211" height="62.6" fill="#000"/>
<path d="M1179.5 497.6L1179.5 495.8L1180.5 496.8L1182.0 496.1L1184.5 495.4L1187.0 493.6L1189.5 490.6L1190.8 486.6L1191.8 482.6L1193.0 478.5L1193.8 478.0L1194.4 478.8L1195.1 478.1L1195.8 479.0L1196.5 479.7L1197.2 479.1L1197.9 480.2L1198.6 480.4L1199.3 483.4L1200.0 479.2L1200.7 481.0L1201.4 481.9L1202.1 483.3L1202.8 480.8L1203.5 480.9L1204.2 481.1L1204.9 485.2L1205.6 480.5L1206.3 481.2L1207.0 483.4L1207.7 481.4L1208.4 481.5L1209.1 481.4L1209.8 483.3L1210.5 483.1L1211.2 482.0L1211.9 483.0L1212.6 482.2L1213.3 483.4L1214.0 484.2L1214.7 483.4L1215.4 483.3L1216.1 484.3L1216.8 484.6L1217.5 484.2L1218.2 483.1L1218.9 483.5L1219.6 484.6L1220.3 484.4L1221.0 484.6L1221.7 484.7L1222.4 483.4L1223.1 484.5L1223.8 483.9L1224.5 484.1L1225.2 484.5L1225.9 483.6L1226.6 484.7L1227.3 483.8L1228.0 484.7L1228.7 484.2L1229.4 484.6L1230.1 484.5L1230.8 483.2L1231.5 483.5L1232.2 484.4L1232.9 483.4L1233.6 484.6L1234.3 484.3L1235.0 483.5L1235.7 483.9L1236.4 484.8L1237.1 483.3L1237.8 484.7L1238.5 484.6L1239.2 483.7L1239.9 484.5L1240.6 484.5L1241.3 484.9L1242.0 484.9L1242.7 484.1L1243.4 484.7L1244.1 484.0L1244.8 484.5L1245.5 484.3L1246.2 483.4L1246.9 484.3L1247.6 484.1L1248.3 483.6L1249.0 484.8L1249.7 484.9L1250.4 483.6L1251.1 483.7L1251.8 484.8L1252.5 484.9L1253.2 483.9L1253.9 483.6L1254.6 484.9L1255.3 483.6L1256.0 483.7L1256.7 484.2L1257.4 484.5L1258.1 485.1L1258.8 485.2L1259.5 483.6L1260.2 484.9L1260.9 484.1L1261.6 484.9L1262.3 483.9L1263.0 484.3L1263.7 484.8L1264.4 485.0L1265.1 484.1L1265.8 485.2L1266.5 484.9L1267.2 484.3L1267.9 483.7L1268.6 484.1L1269.3 484.7L1270.0 483.6L1270.7 484.8L1271.4 485.1L1272.1 484.6L1272.8 484.3L1273.5 485.0L1274.2 484.7L1274.9 484.4L1275.6 484.0L1276.3 484.8L1277.0 484.3L1277.7 483.4L1278.4 483.2L1279.1 483.8L1279.8 483.7L1280.5 483.8L1281.2 484.8L1281.9 483.6L1282.6 484.8L1283.3 483.9L1284.0 484.2L1284.7 484.6L1285.4 483.4L1286.1 483.4L1286.8 483.3L1287.5 484.0L1288.2 483.1L1288.9 483.9L1289.6 483.1L1290.3 483.5L1291.0 483.5L1291.7 484.4L1292.4 482.8L1293.1 483.2L1293.8 483.2L1294.5 483.7L1295.2 484.3L1295.9 484.4L1296.6 483.5L1297.3 483.1L1298.0 483.3L1298.7 483.4L1299.4 483.1L1300.1 484.0L1300.8 483.1L1301.5 482.7L1302.2 483.1L1302.9 483.4L1303.6 482.6L1304.3 483.5L1305.0 482.8L1305.7 482.6L1306.4 482.9L1307.1 483.6L1307.8 483.3L1308.5 483.7L1309.2 482.9L1309.9 483.4L1310.6 482.2L1311.3 482.5L1312.0 483.9L1312.7 482.9L1313.4 482.3L1314.1 481.8L1314.8 483.4L1315.5 482.7L1316.2 482.7L1316.9 488.8L1317.6 482.7L1318.3 483.4L1319.0 482.5L1319.7 482.4L1320.4 480.6L1321.1 483.4L1321.8 482.0L1322.5 482.1L1323.2 491.4L1323.9 482.1L1324.6 483.2L1325.3 481.8L1326.0 483.0L1326.7 482.2L1327.4 491.4L1328.1 488.9L1328.8 481.8L1329.5 482.1L1330.2 481.7L1330.9 483.2L1331.6 482.8L1332.3 482.4L1333.0 482.8L1333.7 481.7L1334.4 481.6L1335.1 482.9L1335.8 480.6L1336.5 482.5L1337.2 489.5L1337.9 482.4L1338.6 489.0L1339.3 481.7L1340.0 482.6L1340.7 484.7L1341.4 482.7L1342.1 491.1L1342.8 482.8L1343.5 482.7L1344.2 482.3L1344.9 482.7L1345.6 481.8L1346.3 481.8L1347.0 481.6L1347.7 482.3L1348.4 482.5L1349.1 482.6L1349.8 481.1L1350.4 483.5L1350.4 497.6Z" fill="#ff0000"/>
<path d="M1179.5 518.4L1179.5 516.6L1180.5 517.6L1182.0 516.9L1184.5 516.2L1187.0 514.4L1189.5 511.4L1190.8 507.4L1191.8 503.4L1193.0 499.8L1193.8 499.3L1194.4 500.0L1195.1 500.8L1195.8 503.8L1196.5 500.1L1197.2 500.5L1197.9 501.4L1198.6 501.5L1199.3 501.8L1200.0 502.0L1200.7 501.7L1201.4 502.1L1202.1 501.0L1202.8 502.6L1203.5 503.4L1204.2 502.8L1204.9 505.1L1205.6 506.5L1206.3 502.8L1207.0 502.6L1207.7 506.2L1208.4 502.3L1209.1 503.0L1209.8 503.7L1210.5 503.3L1211.2 504.4L1211.9 504.4L1212.6 504.3L1213.3 504.2L1214.0 503.8L1214.7 504.5L1215.4 505.5L1216.1 504.3L1216.8 505.1L1217.5 505.0L1218.2 505.5L1218.9 505.2L1219.6 505.3L1220.3 504.6L1221.0 505.8L1221.7 505.0L1222.4 505.6L1223.1 504.8L1223.8 505.9L1224.5 505.5L1225.2 505.4L1225.9 504.9L1226.6 505.9L1227.3 505.2L1228.0 505.7L1228.7 505.5L1229.4 505.2L1230.1 504.4L1230.8 505.2L1231.5 504.4L1232.2 505.8L1232.9 504.5L1233.6 505.5L1234.3 505.8L1235.0 504.8L1235.7 504.5L1236.4 506.1L1237.1 505.7L1237.8 504.8L1238.5 505.5L1239.2 505.7L1239.9 506.1L1240.6 506.1L1241.3 505.1L1242.0 504.5L1242.7 504.5L1243.4 505.3L1244.1 506.2L1244.8 505.6L1245.5 504.9L1246.2 504.8L1246.9 505.1L1247.6 505.8L1248.3 505.3L1249.0 505.4L1249.7 505.2L1250.4 505.8L1251.1 504.6L1251.8 504.7L1252.5 506.0L1253.2 505.8L1253.9 504.8L1254.6 505.8L1255.3 504.7L1256.0 505.4L1256.7 505.1L1257.4 505.1L1258.1 506.0L1258.8 505.9L1259.5 505.9L1260.2 505.2L1260.9 505.2L1261.6 506.2L1262.3 504.9L1263.0 505.7L1263.7 506.0L1264.4 505.7L1265.1 504.7L1265.8 505.5L1266.5 505.4L1267.2 504.9L1267.9 504.8L1268.6 505.1L1269.3 505.7L1270.0 505.4L1270.7 504.8L1271.4 505.0L1272.1 505.3L1272.8 505.7L1273.5 505.7L1274.2 505.0L1274.9 505.3L1275.6 506.2L1276.3 505.0L1277.0 504.7L1277.7 504.8L1278.4 504.6L1279.1 504.6L1279.8 505.2L1280.5 504.8L1281.2 505.4L1281.9 505.9L1282.6 505.4L1283.3 505.5L1284.0 504.4L1284.7 504.8L1285.4 504.1L1286.1 504.8L1286.8 505.5L1287.5 505.4L1288.2 505.2L1288.9 504.7L1289.6 504.7L1290.3 504.5L1291.0 505.1L1291.7 504.7L1292.4 505.4L1293.1 503.6L1293.8 505.3L1294.5 505.0L1295.2 504.1L1295.9 504.5L1296.6 504.9L1297.3 504.2L1298.0 504.8L1298.7 504.2L1299.4 504.7L1300.1 504.9L1300.8 504.4L1301.5 504.6L1302.2 504.9L1302.9 504.9L1303.6 504.9L1304.3 505.2L1305.0 504.5L1305.7 505.3L1306.4 504.9L1307.1 504.3L1307.8 503.9L1308.5 503.8L1309.2 503.9L1309.9 504.0L1310.6 504.2L1311.3 504.6L1312.0 504.6L1312.7 503.8L1313.4 504.9L1314.1 503.5L1314.8 505.1L1315.5 503.6L1316.2 504.5L1316.9 503.3L1317.6 503.7L1318.3 503.1L1319.0 505.0L1319.7 504.7L1320.4 504.5L1321.1 504.7L1321.8 511.6L1322.5 504.0L1323.2 503.8L1323.9 503.8L1324.6 504.2L1325.3 503.6L1326.0 504.0L1326.7 503.2L1327.4 504.1L1328.1 506.8L1328.8 512.4L1329.5 503.7L1330.2 508.1L1330.9 511.8L1331.6 504.0L1332.3 503.3L1333.0 503.0L1333.7 504.0L1334.4 508.2L1335.1 503.8L1335.8 503.3L1336.5 503.1L1337.2 504.2L1337.9 503.9L1338.6 502.6L1339.3 503.2L1340.0 504.3L1340.7 504.2L1341.4 503.4L1342.1 503.8L1342.8 509.4L1343.5 504.0L1344.2 503.8L1344.9 503.8L1345.6 511.4L1346.3 504.1L1347.0 508.8L1347.7 503.8L1348.4 503.9L1349.1 503.2L1349.8 503.4L1350.5 503.4L1351.2 502.9L1351.9 502.9L1352.6 503.1L1353.3 502.2L1354.0 503.4L1354.7 503.8L1355.4 503.5L1356.1 503.8L1356.8 502.5L1357.5 503.1L1357.8 504.6L1357.8 518.4Z" fill="#00ff00"/>
<path d="M1179.5 539.8L1179.5 538.0L1180.5 539.0L1182.0 538.3L1184.5 537.6L1187.0 535.8L1189.5 532.8L1190.8 528.8L1191.8 524.8L1193.0 520.7L1193.8 520.2L1194.4 521.3L1195.1 520.7L1195.8 523.1L1196.5 521.8L1197.2 522.1L1197.9 524.4L1198.6 521.2L1199.3 524.2L1200.0 521.4L1200.7 521.7L1201.4 522.0L1202.1 525.5L1202.8 522.7L1203.5 522.7L1204.2 523.2L1204.9 526.9L1205.6 522.8L1206.3 523.1L1207.0 526.1L1207.7 525.4L1208.4 526.2L1209.1 523.9L1209.8 524.9L1210.5 526.4L1211.2 527.7L1211.9 523.9L1212.6 525.0L1213.3 524.6L1214.0 524.4L1214.7 526.1L1215.4 526.1L1216.1 525.1L1216.8 525.2L1217.5 525.7L1218.2 526.7L1218.9 526.2L1219.6 525.4L1220.3 525.4L1221.0 525.6L1221.7 526.6L1222.4 525.5L1223.1 526.4L1223.8 525.8L1224.5 526.8L1225.2 525.3L1225.9 526.0L1226.6 525.8L1227.3 526.7L1228.0 526.0L1228.7 526.1L1229.4 526.0L1230.1 526.5L1230.8 525.8L1231.5 526.5L1232.2 526.6L1232.9 526.8L1233.6 525.9L1234.3 526.9L1235.0 526.7L1235.7 527.0L1236.4 526.0L1237.1 526.2L1237.8 526.2L1238.5 527.1L1239.2 526.4L1239.9 526.6L1240.6 527.0L1241.3 527.2L1242.0 525.5L1242.7 527.0L1243.4 526.7L1244.1 526.8L1244.8 526.2L1245.5 527.1L1246.2 526.4L1246.9 526.6L1247.6 525.8L1248.3 527.3L1249.0 526.7L1249.7 526.4L1250.4 525.6L1251.1 526.4L1251.8 526.5L1252.5 526.2L1253.2 526.8L1253.9 527.3L1254.6 526.5L1255.3 525.8L1256.0 526.1L1256.7 526.9L1257.4 526.2L1258.1 525.9L1258.8 526.9L1259.5 526.4L1260.2 526.8L1260.9 527.0L1261.6 526.9L1262.3 527.1L1263.0 526.8L1263.7 527.4L1264.4 526.8L1265.1 527.3L1265.8 526.1L1266.5 526.4L1267.2 527.5L1267.9 526.1L1268.6 527.2L1269.3 526.7L1270.0 526.5L1270.7 526.9L1271.4 527.0L1272.1 526.8L1272.8 527.3L1273.5 526.0L1274.2 527.3L1274.9 526.0L1275.6 527.1L1276.3 526.9L1277.0 526.7L1277.7 527.3L1278.4 527.2L1279.1 526.7L1279.8 526.6L1280.5 525.8L1281.2 525.6L1281.9 527.2L1282.6 526.3L1283.3 527.0L1284.0 525.8L1284.7 526.6L1285.4 525.6L1286.1 526.2L1286.8 526.9L1287.5 527.1L1288.2 526.7L1288.9 525.6L1289.6 526.8L1290.3 526.4L1291.0 525.6L1291.7 525.8L1292.4 525.4L1293.1 525.4L1293.8 526.0L1294.5 525.5L1295.2 525.9L1295.9 525.5L1296.6 526.4L1297.3 526.3L1298.0 526.8L1298.7 526.7L1299.4 525.3L1300.1 525.4L1300.8 525.7L1301.5 525.5L1302.2 524.9L1302.9 525.0L1303.6 526.2L1304.3 525.9L1305.0 526.2L1305.7 525.0L1306.4 525.1L1307.1 525.9L1307.8 525.3L1308.5 526.1L1309.2 525.0L1309.9 526.2L1310.6 525.7L1311.3 524.2L1312.0 525.3L1312.7 525.9L1313.4 525.6L1314.1 525.0L1314.8 525.1L1315.5 525.6L1316.2 526.3L1316.9 526.1L1317.6 525.3L1318.3 524.7L1319.0 525.4L1319.7 525.9L1320.4 526.2L1321.1 524.9L1321.8 524.7L1322.5 525.5L1323.2 523.5L1323.9 524.5L1324.6 524.7L1325.3 524.9L1326.0 525.1L1326.7 525.9L1327.4 524.0L1328.1 525.0L1328.8 524.7L1329.5 525.4L1330.2 525.1L1330.9 524.3L1331.6 525.4L1332.3 531.4L1333.0 525.2L1333.7 524.2L1334.4 529.5L1335.1 525.6L1335.8 524.1L1336.5 525.3L1337.2 531.4L1337.9 533.8L1338.6 525.7L1339.3 524.2L1340.0 524.5L1340.7 524.5L1341.4 533.3L1342.1 524.9L1342.8 525.2L1343.5 524.1L1344.2 535.1L1344.9 523.9L1345.6 531.6L1346.3 525.4L1347.0 524.8L1347.7 534.8L1348.4 524.1L1349.1 527.7L1349.8 534.6L1350.5 525.4L1351.2 523.0L1351.9 524.3L1352.6 524.4L1353.3 524.4L1354.0 523.5L1354.7 524.6L1355.4 524.6L1356.1 524.3L1356.8 524.3L1357.5 524.0L1358.2 524.3L1358.9 524.5L1359.6 525.1L1360.3 533.4L1361.0 530.5L1361.7 523.7L1362.4 523.3L1363.1 523.9L1363.8 532.6L1364.5 524.1L1365.2 533.4L1365.9 530.2L1366.6 523.4L1367.3 533.6L1367.8 525.7L1367.8 539.8Z" fill="#0000ff"/>
</svg>
<!--/P4-->
<!--P5--><!-- presets -->
<div class="abs" style="left:202px;top:684px;width:137.5px;height:77px;background:#151515"></div>
<div class="abs" style="left:204px;top:687.5px;width:38px;height:16.3px;background:#20407f"></div>
<div class="t" style="left:209.2px;top:691px;font-size:7.6px;color:#c9d3ea">Presets</div>
<div class="t" style="left:249.2px;top:691px;font-size:7.6px;color:#dcdcdc">Log</div>
<div class="abs" style="left:267.8px;top:687.5px;width:1px;height:16.3px;background:#2e2f33"></div>
<svg class="abs" style="left:281.8px;top:687.9px" width="15" height="15" viewBox="-7.5 -7.5 15 15"><circle r="6.8" fill="#d61c2a"/><path d="M-3.4 0H3.4M0 -3.4V3.4" stroke="#fff" stroke-width="1.5"/></svg>
<div class="tile" style="left:203.30px;top:711px;width:41.6px;height:41.6px">
 <div class="tl" style="left:1.8px;top:0.4px;font-weight:normal;font-size:6.8px;color:#e0e0e0">1</div>
 <svg class="abs" style="left:6.6px;top:1.6px" width="10" height="10" viewBox="-5 -5 10 10"><defs><radialGradient id="wg0"><stop offset="0" stop-color="#fff" stop-opacity="0.95"/><stop offset="0.45" stop-color="#fff" stop-opacity="0.35"/><stop offset="1" stop-color="#fff" stop-opacity="0"/></radialGradient></defs>
<path d="M0 0L0.00 -4.70A4.7 4.7 0 0 1 3.09 -3.54Z" fill="#f03030"/>
<path d="M0 0L3.02 -3.60A4.7 4.7 0 0 1 4.64 -0.72Z" fill="#f0a020"/>
<path d="M0 0L4.63 -0.82A4.7 4.7 0 0 1 4.02 2.43Z" fill="#e0e020"/>
<path d="M0 0L4.07 2.35A4.7 4.7 0 0 1 1.52 4.45Z" fill="#40e030"/>
<path d="M0 0L1.61 4.42A4.7 4.7 0 0 1 -1.70 4.38Z" fill="#20d0a0"/>
<path d="M0 0L-1.61 4.42A4.7 4.7 0 0 1 -4.12 2.27Z" fill="#20a0f0"/>
<path d="M0 0L-4.07 2.35A4.7 4.7 0 0 1 -4.61 -0.91Z" fill="#3040f0"/>
<path d="M0 0L-4.63 -0.82A4.7 4.7 0 0 1 -2.95 -3.66Z" fill="#a030f0"/>
<path d="M0 0L-3.02 -3.60A4.7 4.7 0 0 1 0.09 -4.70Z" fill="#f030c0"/>
<circle r="4.7" fill="url(#wg0)"/></svg>
 <svg class="abs" style="left:27px;top:2.5px" width="10.4" height="7.4" viewBox="0 0 10.4 7.4"><rect x="0.3" y="0.3" width="9.8" height="6.8" fill="#1aa83a" stroke="#c8d8e8" stroke-width="0.6"/><rect x="0.8" y="0.8" width="8.8" height="2.2" fill="#4aa0e0"/><path d="M0.8 5L3 2.6L5 4.6L6.6 3L9.6 5.6V6.6H0.8Z" fill="#0c7c24"/><circle cx="8" cy="2" r="0.8" fill="#f0e040"/></svg>
 <div class="tc" style="top:18.4px;font-weight:normal;font-size:6.8px;color:#d4d4d4">Preset 1</div>
 <div class="pill" style="left:14px;top:38px;width:13.5px;height:2.8px"></div>
</div>
<div class="tile" style="left:247.95px;top:711px;width:41.6px;height:41.6px">
 <div class="tl" style="left:1.8px;top:0.4px;font-weight:normal;font-size:6.8px;color:#e0e0e0">2</div>
 <svg class="abs" style="left:6.6px;top:1.6px" width="10" height="10" viewBox="-5 -5 10 10"><defs><radialGradient id="wg1"><stop offset="0" stop-color="#fff" stop-opacity="0.95"/><stop offset="0.45" stop-color="#fff" stop-opacity="0.35"/><stop offset="1" stop-color="#fff" stop-opacity="0"/></radialGradient></defs>
<path d="M0 0L0.00 -4.70A4.7 4.7 0 0 1 3.09 -3.54Z" fill="#f03030"/>
<path d="M0 0L3.02 -3.60A4.7 4.7 0 0 1 4.64 -0.72Z" fill="#f0a020"/>
<path d="M0 0L4.63 -0.82A4.7 4.7 0 0 1 4.02 2.43Z" fill="#e0e020"/>
<path d="M0 0L4.07 2.35A4.7 4.7 0 0 1 1.52 4.45Z" fill="#40e030"/>
<path d="M0 0L1.61 4.42A4.7 4.7 0 0 1 -1.70 4.38Z" fill="#20d0a0"/>
<path d="M0 0L-1.61 4.42A4.7 4.7 0 0 1 -4.12 2.27Z" fill="#20a0f0"/>
<path d="M0 0L-4.07 2.35A4.7 4.7 0 0 1 -4.61 -0.91Z" fill="#3040f0"/>
<path d="M0 0L-4.63 -0.82A4.7 4.7 0 0 1 -2.95 -3.66Z" fill="#a030f0"/>
<path d="M0 0L-3.02 -3.60A4.7 4.7 0 0 1 0.09 -4.70Z" fill="#f030c0"/>
<circle r="4.7" fill="url(#wg1)"/></svg>
 <svg class="abs" style="left:27px;top:2.5px" width="10.4" height="7.4" viewBox="0 0 10.4 7.4"><rect x="0.3" y="0.3" width="9.8" height="6.8" fill="#1aa83a" stroke="#c8d8e8" stroke-width="0.6"/><rect x="0.8" y="0.8" width="8.8" height="2.2" fill="#4aa0e0"/><path d="M0.8 5L3 2.6L5 4.6L6.6 3L9.6 5.6V6.6H0.8Z" fill="#0c7c24"/><circle cx="8" cy="2" r="0.8" fill="#f0e040"/></svg>
 <div class="tc" style="top:18.4px;font-weight:normal;font-size:6.8px;color:#d4d4d4">Preset 2</div>
 <div class="pill" style="left:14px;top:38px;width:13.5px;height:2.8px"></div>
</div>
<div class="tile" style="left:292.60px;top:711px;width:41.6px;height:41.6px">
 <div class="tl" style="left:1.8px;top:0.4px;font-weight:normal;font-size:6.8px;color:#e0e0e0">3</div>
 <svg class="abs" style="left:6.6px;top:1.6px" width="10" height="10" viewBox="-5 -5 10 10"><defs><radialGradient id="wg2"><stop offset="0" stop-color="#fff" stop-opacity="0.95"/><stop offset="0.45" stop-color="#fff" stop-opacity="0.35"/><stop offset="1" stop-color="#fff" stop-opacity="0"/></radialGradient></defs>
<path d="M0 0L0.00 -4.70A4.7 4.7 0 0 1 3.09 -3.54Z" fill="#f03030"/>
<path d="M0 0L3.02 -3.60A4.7 4.7 0 0 1 4.64 -0.72Z" fill="#f0a020"/>
<path d="M0 0L4.63 -0.82A4.7 4.7 0 0 1 4.02 2.43Z" fill="#e0e020"/>
<path d="M0 0L4.07 2.35A4.7 4.7 0 0 1 1.52 4.45Z" fill="#40e030"/>
<path d="M0 0L1.61 4.42A4.7 4.7 0 0 1 -1.70 4.38Z" fill="#20d0a0"/>
<path d="M0 0L-1.61 4.42A4.7 4.7 0 0 1 -4.12 2.27Z" fill="#20a0f0"/>
<path d="M0 0L-4.07 2.35A4.7 4.7 0 0 1 -4.61 -0.91Z" fill="#3040f0"/>
<path d="M0 0L-4.63 -0.82A4.7 4.7 0 0 1 -2.95 -3.66Z" fill="#a030f0"/>
<path d="M0 0L-3.02 -3.60A4.7 4.7 0 0 1 0.09 -4.70Z" fill="#f030c0"/>
<circle r="4.7" fill="url(#wg2)"/></svg>
 <svg class="abs" style="left:27px;top:2.5px" width="10.4" height="7.4" viewBox="0 0 10.4 7.4"><rect x="0.3" y="0.3" width="9.8" height="6.8" fill="#1aa83a" stroke="#c8d8e8" stroke-width="0.6"/><rect x="0.8" y="0.8" width="8.8" height="2.2" fill="#4aa0e0"/><path d="M0.8 5L3 2.6L5 4.6L6.6 3L9.6 5.6V6.6H0.8Z" fill="#0c7c24"/><circle cx="8" cy="2" r="0.8" fill="#f0e040"/></svg>
 <div class="tc" style="top:18.4px;font-weight:normal;font-size:6.8px;color:#d4d4d4">Preset 3</div>
 <div class="pill" style="left:14px;top:38px;width:13.5px;height:2.8px"></div>
</div>
<!--/P5-->
<!--APP-->
</div></div>
<svg id="anno" viewBox="0 0 1600 900">
<g fill="none" stroke="#00b0f0" stroke-width="2.1">
<!-- region boxes -->
<rect x="203" y="130.1" width="149" height="19.7"/>
<rect x="203" y="217" width="357" height="21"/>
<rect x="472" y="150" width="145" height="65.5"/>
<rect x="625" y="150" width="160" height="65.5"/>
<rect x="794" y="150" width="160.5" height="65.5"/>
<rect x="964" y="150" width="159.5" height="65.5"/>
<rect x="1233" y="130.1" width="160" height="19.7"/>
<rect x="955" y="217" width="137.5" height="21"/>
<rect x="1096.8" y="218" width="296.2" height="327"/>
<rect x="441" y="282" width="553" height="342"/>
<rect x="203" y="685" width="136.5" height="75"/>
<rect x="1100" y="672" width="14" height="13"/>
<!-- leader lines -->
<path d="M277 109V130.5"/>
<path d="M381 110V217"/>
<path d="M544 93V150"/>
<path d="M705 93V150"/>
<path d="M873.5 93V150"/>
<path d="M1043 93V150"/>
<path d="M1312.5 110V130.5"/>
<path d="M271 760V815"/>
<path d="M717 624V782"/>
<path d="M954.5 238V789"/>
<path d="M1114 678H1125V782"/>
<path d="M1244 545L1245 782"/>
</g>
<g>
<text x="219.5" y="68.8" textLength="114.3" lengthAdjust="spacingAndGlyphs">Dropdown</text>
<text x="245.3" y="100.7" textLength="62.7" lengthAdjust="spacingAndGlyphs">Menu</text>
<text x="340.2" y="104" textLength="81.8" lengthAdjust="spacingAndGlyphs">Toolbar</text>
<text x="510.6" y="82" textLength="67.9" lengthAdjust="spacingAndGlyphs">Inputs</text>
<text x="648.4" y="82.5" textLength="115" lengthAdjust="spacingAndGlyphs">Processing</text>
<text x="825" y="83" textLength="96.4" lengthAdjust="spacingAndGlyphs">Override</text>
<text x="1003.9" y="83" textLength="78.3" lengthAdjust="spacingAndGlyphs">Output</text>
<text x="1259.2" y="69.5" textLength="106.8" lengthAdjust="spacingAndGlyphs">Processor</text>
<text x="1248" y="101.4" textLength="129" lengthAdjust="spacingAndGlyphs">information</text>
<text x="198" y="783" textLength="80" lengthAdjust="spacingAndGlyphs">Presets</text>
<text x="678.6" y="812.8" textLength="76.7" lengthAdjust="spacingAndGlyphs">Canvas</text>
<text x="916.6" y="814.8" textLength="75.9" lengthAdjust="spacingAndGlyphs">Canvas</text>
<text x="854.7" y="846.6" textLength="200.5" lengthAdjust="spacingAndGlyphs">properties toolbar</text>
<text x="1073" y="812.8" textLength="104.7" lengthAdjust="spacingAndGlyphs">Navigator</text>
<text x="1194.2" y="813.6" textLength="102.3" lengthAdjust="spacingAndGlyphs">Tabs area</text>
</g>
</svg>
</div>
</body>
</html>
